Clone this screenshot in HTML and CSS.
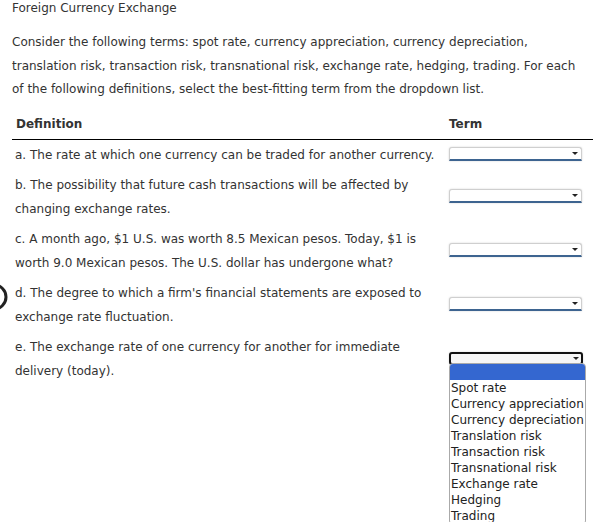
FILE: index.html
```html
<!DOCTYPE html>
<html>
<head>
<meta charset="utf-8">
<link rel="stylesheet" href="styles.css">
</head>
<body>
<div class="page">
  <div class="title">Foreign Currency Exchange</div>
  <p class="intro">Consider the following terms: spot rate, currency appreciation, currency depreciation, translation risk, transaction risk, transnational risk, exchange rate, hedging, trading. For each of the following definitions, select the best-fitting term from the dropdown list.</p>
  <table class="grid">
    <thead>
      <tr><th class="def">Definition</th><th class="term">Term</th></tr>
    </thead>
    <tbody>
      <tr><td class="def">a. The rate at which one currency can be traded for another currency.</td><td class="term"><div class="sel"><span class="arrow"></span></div></td></tr>
      <tr><td class="def">b. The possibility that future cash transactions will be affected by changing exchange rates.</td><td class="term"><div class="sel"><span class="arrow"></span></div></td></tr>
      <tr><td class="def">c. A month ago, $1 U.S. was worth 8.5 Mexican pesos. Today, $1 is worth 9.0 Mexican pesos. The U.S. dollar has undergone what?</td><td class="term"><div class="sel"><span class="arrow"></span></div></td></tr>
      <tr><td class="def">d. The degree to which a firm's financial statements are exposed to exchange rate fluctuation.</td><td class="term"><div class="sel"><span class="arrow"></span></div></td></tr>
      <tr><td class="def">e. The exchange rate of one currency for another for immediate delivery (today).</td><td class="term"><div class="sel focus"><span class="arrow"></span>
        <ul class="menu">
          <li class="hl">&nbsp;</li>
          <li>Spot rate</li>
          <li>Currency appreciation</li>
          <li>Currency depreciation</li>
          <li>Translation risk</li>
          <li>Transaction risk</li>
          <li>Transnational risk</li>
          <li>Exchange rate</li>
          <li>Hedging</li>
          <li>Trading</li>
        </ul>
      </div></td></tr>
    </tbody>
  </table>
</div>
<svg class="edge" width="12" height="30" viewBox="0 0 12 30"><circle cx="-6" cy="15" r="12" fill="none" stroke="#222" stroke-width="3"/></svg>
</body>
</html>
```

FILE: styles.css
```css
html, body {
  margin: 0;
  padding: 0;
  background: #fff;
}
body {
  font-family: "DejaVu Sans", Verdana, sans-serif;
  font-size: 12px;
  color: #333;
  overflow: hidden;
  height: 522px;
  position: relative;
}
.page {
  padding: 0 0 0 12px;
}
.title {
  line-height: 16px;
}
.intro {
  margin: 15px 0 0 0;
  line-height: 23.5px;
  max-width: 572px;
}
.grid {
  border-collapse: collapse;
  margin-top: 8px;
  width: 581px;
}
.grid th {
  font-weight: bold;
  text-align: left;
  padding: 6px 4px 7px 4px;
  line-height: 16px;
  border-bottom: 1px solid #000;
  vertical-align: bottom;
}
.grid td {
  padding: 3px 4px 3px 3px;
  line-height: 24px;
  vertical-align: middle;
}
.grid .def {
  width: 421px;
  padding-right: 8px;
}
.grid .term {
  padding-left: 4px;
}
.sel {
  position: relative;
  width: 131px;
  height: 11px;
  border: 1px solid #cfcfcf;
  border-bottom: 2px solid #3d6490;
  border-radius: 3px 3px 0 0;
  box-shadow: 0 0 2px rgba(0,0,0,0.18);
  background: #fff;
  margin-top: -1px;
}
.sel.focus {
  border: 2px solid #111;
  border-radius: 3px;
  width: 130px;
  height: 9px;
  background: #f6f6f6;
}
.arrow {
  position: absolute;
  right: 3px;
  top: 4px;
  width: 0;
  height: 0;
  border-left: 3px solid transparent;
  border-right: 3px solid transparent;
  border-top: 3px solid #222;
}
.sel.focus .arrow {
  top: 3px;
  right: 2px;
}
.menu {
  position: absolute;
  left: -2px;
  top: 9px;
  width: 135px;
  margin: 0;
  padding: 0;
  list-style: none;
  background: #fff;
  border: 1px solid #aaa;
  border-radius: 4px;
  font-size: 12px;
  line-height: 16px;
  color: #222;
  z-index: 5;
  overflow: hidden;
}
.menu li {
  padding-left: 1px;
  height: 16px;
  white-space: nowrap;
}
.menu li.hl {
  background: #3467d0;
}
.edge {
  position: absolute;
  left: 0;
  top: 282px;
}
```
